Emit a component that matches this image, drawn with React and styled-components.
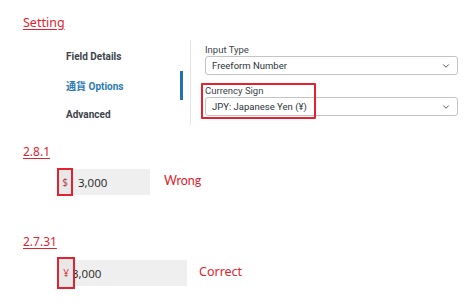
import React from 'react';
import styled, { createGlobalStyle } from 'styled-components';
import { ChevronDown } from 'lucide-react';

const RED = '#e2232f';

const GlobalStyle = createGlobalStyle`
  body {
    margin: 0;
    background: #fff;
    font-family: "Noto Sans", "Noto Sans CJK JP", sans-serif;
  }
`;

const navItems = [
  { label: 'Field Details' },
  { label: '通貨 Options', active: true },
  { label: 'Advanced' },
];

const fields = [
  { label: 'Input Type', value: 'Freeform Number' },
  { label: 'Currency Sign', value: 'JPY: Japanese Yen (¥)', marked: true },
];

const App = () => {
  return (
    <Page>
      <GlobalStyle />
      <Heading>Setting</Heading>
      <Panel>
        <Nav>
          {navItems.map(item => (
            <NavItem key={item.label} $active={item.active}>{item.label}</NavItem>
          ))}
        </Nav>
        <Fields>
          {fields.map(f => (
            <FieldGroup key={f.label}>
              {f.marked && <Marker />}
              <FieldLabel>{f.label}</FieldLabel>
              <Select>
                <span>{f.value}</span>
                <ChevronDown size={10} strokeWidth={2.4} color="#50575e" />
              </Select>
            </FieldGroup>
          ))}
        </Fields>
      </Panel>

      <Version $gap={15}>2.8.1</Version>
      <Row $gap={8}>
        <MoneyInput $width={93}>
          <Prefix $height={28} $color="#b0343c">$</Prefix>
          <Amount $shift={5}>3,000</Amount>
        </MoneyInput>
        <Verdict $gap={14} $font='"Lato", sans-serif'>Wrong</Verdict>
      </Row>

      <Version $gap={38}>2.7.31</Version>
      <Row $gap={7} $height={32}>
        <MoneyInput $width={130}>
          <Prefix $height={32} $color={RED}>¥</Prefix>
          <Amount $shift={-3}>3,000</Amount>
        </MoneyInput>
        <Verdict $gap={12}>Correct</Verdict>
      </Row>
    </Page>
  );
};

const Page = styled.div`
  padding: 14px 0 0 23px;
  width: 474px;
  height: 307px;
  box-sizing: border-box;
  overflow: hidden;
`;

const Heading = styled.div`
  color: ${RED};
  font-size: 12.5px;
  line-height: 18px;
  text-decoration: underline;
  text-underline-offset: 2px;
`;

const Panel = styled.div`
  display: flex;
  align-items: flex-start;
  margin: 8px 0 0 43px;
  width: 392px;
  font-family: Roboto, "Noto Sans CJK JP", sans-serif;
`;

const Nav = styled.div`
  display: flex;
  flex-direction: column;
  width: 117px;
  padding: 2px 7px 0 0;
`;

const NavItem = styled.div`
  height: 29px;
  display: flex;
  align-items: center;
  font-size: 10px;
  font-weight: 700;
  color: ${p => (p.$active ? '#2a7ab5' : '#3c434a')};
  border-right: 3px solid ${p => (p.$active ? '#2271b1' : 'transparent')};
`;

const Fields = styled.div`
  flex: 1;
  border-left: 1px solid #e4e5e7;
  padding: 4px 0 9px 14px;
  display: flex;
  flex-direction: column;
  gap: 10px;
`;

const FieldGroup = styled.div`
  position: relative;
  display: flex;
  flex-direction: column;
  gap: 1px;
`;

const Marker = styled.div`
  position: absolute;
  left: -4px;
  top: -2px;
  width: 111px;
  height: 32px;
  border: 2px solid ${RED};
  border-radius: 1px;
  pointer-events: none;
`;

const FieldLabel = styled.div`
  font-size: 9.5px;
  line-height: 11px;
  color: #3c434a;
`;

const Select = styled.div`
  height: 19px;
  box-sizing: border-box;
  border: 1px solid #c3c4c7;
  border-radius: 3px;
  display: flex;
  align-items: center;
  justify-content: space-between;
  padding: 0 6px 0 6px;
  font-size: 9.5px;
  color: #2c3338;
`;

const Version = styled.div`
  margin-top: ${p => p.$gap}px;
  color: ${RED};
  font-size: 12px;
  line-height: 16px;
  text-decoration: underline;
  text-underline-offset: 2px;
`;

const Row = styled.div`
  margin: ${p => p.$gap}px 0 0 34px;
  height: ${p => p.$height || 28}px;
  display: flex;
  align-items: center;
`;

const MoneyInput = styled.div`
  width: ${p => p.$width}px;
  height: 26px;
  background: #efefef;
  display: flex;
  align-items: center;
`;

const Prefix = styled.span`
  position: relative;
  z-index: 1;
  box-sizing: border-box;
  width: ${p => (p.$height > 28 ? 18 : 16)}px;
  height: ${p => p.$height}px;
  border: 2px solid ${RED};
  background: #e8e8e8;
  display: flex;
  align-items: center;
  justify-content: center;
  font-family: "Open Sans", sans-serif;
  font-size: 10px;
  color: ${p => p.$color};
`;

const Amount = styled.span`
  margin-left: ${p => p.$shift}px;
  font-family: "Open Sans", sans-serif;
  font-size: 11.5px;
  color: #1e1e1e;
`;

const Verdict = styled.span`
  margin-left: ${p => p.$gap}px;
  margin-top: -3px;
  color: ${RED};
  font-family: ${p => p.$font || '"Noto Sans", sans-serif'};
  font-size: 12.5px;
`;

export default App;
